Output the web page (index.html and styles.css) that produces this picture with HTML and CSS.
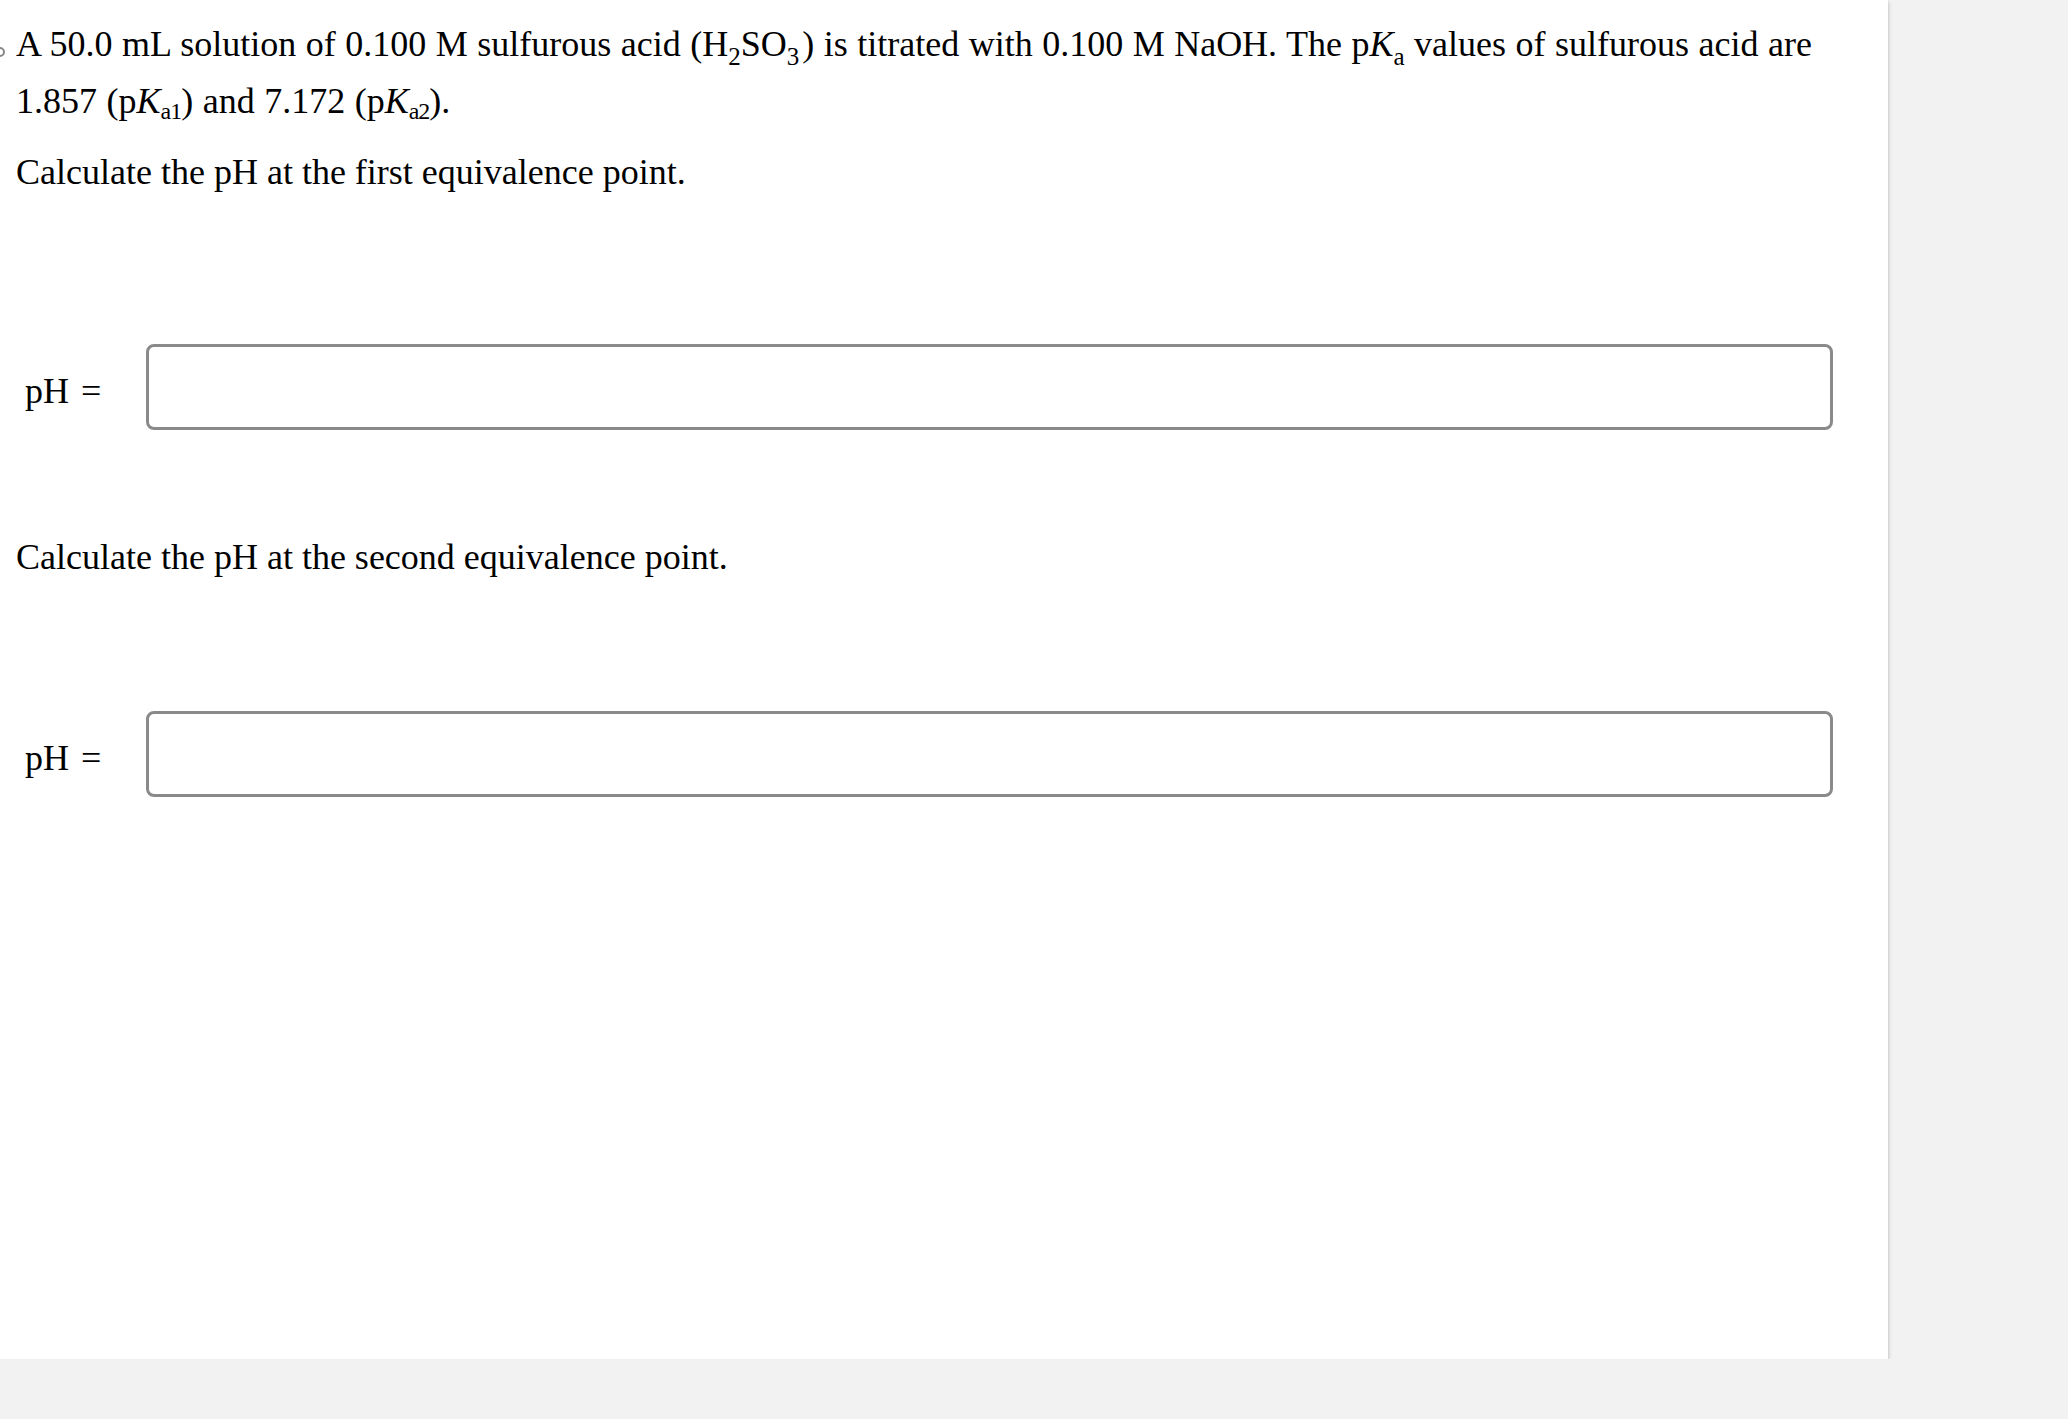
FILE: index.html
```html
<!DOCTYPE html>
<html>
<head>
<meta charset="utf-8">
<link rel="stylesheet" href="styles.css">
</head>
<body>
<div class="panel">
  <span class="dot"></span>
  <div class="content">
    <p class="intro">A 50.0 mL solution of 0.100 M sulfurous acid <span class="formula">(H<sub>2</sub>SO<sub>3</sub>&#8202;)</span> is titrated with 0.100 M NaOH. The p<i>K</i><sub class="sa">a</sub> values of sulfurous acid are 1.857 (p<i>K</i><sub class="sk">a1</sub>) and 7.172 (p<i>K</i><sub class="sk">a2</sub>).</p>
    <p class="question q1">Calculate the pH at the first equivalence point.</p>
    <div class="answer a1">
      <span class="label">pH =</span>
      <div class="box"></div>
    </div>
    <p class="question q2">Calculate the pH at the second equivalence point.</p>
    <div class="answer a2">
      <span class="label">pH =</span>
      <div class="box"></div>
    </div>
  </div>
</div>
</body>
</html>
```

FILE: styles.css
```css
html, body {
  margin: 0;
  padding: 0;
  background: #f2f2f2;
}
body {
  font-family: "Liberation Serif", "Times New Roman", serif;
  color: #000;
}
.panel {
  position: relative;
  width: 1888px;
  height: 1359px;
  background: #fff;
  box-shadow: 0 2px 4px rgba(0,0,0,0.28);
  overflow: hidden;
}
.dot {
  position: absolute;
  left: -5px;
  top: 47px;
  width: 10px;
  height: 10px;
  border: 2px solid #888;
  border-radius: 50%;
  box-sizing: border-box;
}
.content {
  padding: 16px 0 0 16px;
  font-size: 36px;
}
.intro {
  margin: 0;
  width: 1830px;
  line-height: 57px;
  word-spacing: 0.5px;
}
.intro sub {
  font-size: 25px;
  line-height: 0;
  vertical-align: -9px;
}
.intro .sk {
  font-size: 24px;
  vertical-align: -6px;
  letter-spacing: -1px;
}
.intro i {
  font-style: italic;
}
.question {
  margin: 0;
  line-height: 56px;
}
.q1 {
  margin-top: 14px;
}
.answer {
  display: flex;
  align-items: center;
}
.a1 {
  margin-top: 144px;
}
.label {
  width: 130px;
  padding-left: 9px;
  padding-top: 8px;
  box-sizing: border-box;
  word-spacing: 3px;
}
.box {
  width: 1687px;
  height: 86px;
  box-sizing: border-box;
  border: 3px solid #8a8a8a;
  border-radius: 8px;
  background: #fff;
}
.q2 {
  margin-top: 99px;
}
.a2 {
  margin-top: 126px;
}
```
